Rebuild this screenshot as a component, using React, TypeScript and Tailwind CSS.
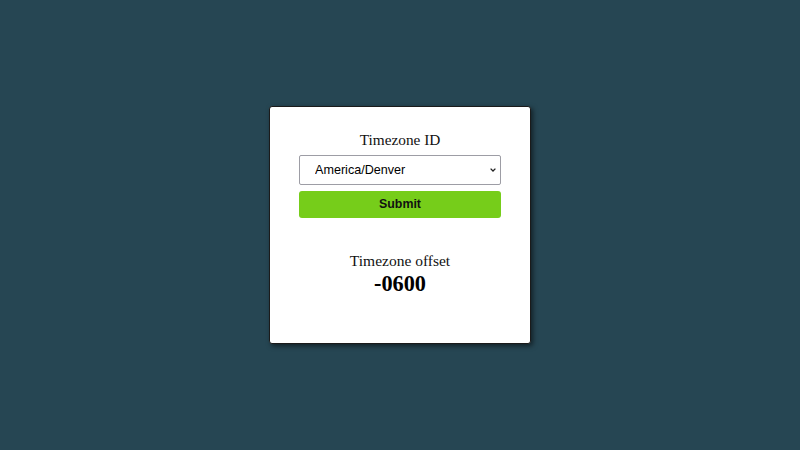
import { useState } from "react";

const zones: Record<string, string> = {
  "America/Denver": "-0600",
  "America/New_York": "-0400",
  "Europe/London": "+0100",
  "Asia/Tokyo": "+0900",
};

export default function App() {
  const [zone, setZone] = useState("America/Denver");
  const [offset, setOffset] = useState(zones["America/Denver"]);

  return (
    <div className="flex h-[450px] w-full items-center justify-center bg-[#264653]">
      <div className="flex h-[238px] w-[262px] flex-col items-center rounded-[3px] border border-[#1b1b1b] bg-white px-[29px] pt-[24px] shadow-[2px_2px_5px_rgba(0,0,0,0.55)]">
        <div className="h-[18px] font-['Liberation_Serif',serif] text-[15.3px] leading-[18px] text-[#111]">
          Timezone ID
        </div>
        <div className="relative mt-[6px] w-full">
          <select
            value={zone}
            onChange={(e) => setZone(e.target.value)}
            className="h-[30px] w-full appearance-none rounded-[2px] border border-[#9d9da5] bg-white pl-[15px] pr-[16px] font-['Liberation_Sans',sans-serif] text-[12.6px] text-black"
          >
            {Object.keys(zones).map((z) => (
              <option key={z} value={z}>
                {z}
              </option>
            ))}
          </select>
          {/* small native-looking chevron */}
          <svg
            viewBox="0 0 6 4"
            className="pointer-events-none absolute right-[5px] top-[13px] h-[4px] w-[6px]"
          >
            <path d="M0.6 0.6 L3 3 L5.4 0.6" fill="none" stroke="#222" strokeWidth="1.3" />
          </svg>
        </div>
        <button
          onClick={() => setOffset(zones[zone])}
          className="mt-[6px] h-[27px] w-full rounded-[3px] bg-[#76cd1a] font-['Liberation_Sans',sans-serif] text-[12.4px] font-bold text-[#111]"
        >
          Submit
        </button>
        <div className="mt-[34px] h-[18px] font-['Liberation_Serif',serif] text-[15.5px] leading-[18px] text-[#111]">
          Timezone offset
        </div>
        <div className="mt-px font-['Liberation_Serif',serif] text-[22.3px] font-bold leading-[26px] text-black">
          {offset}
        </div>
      </div>
    </div>
  );
}
